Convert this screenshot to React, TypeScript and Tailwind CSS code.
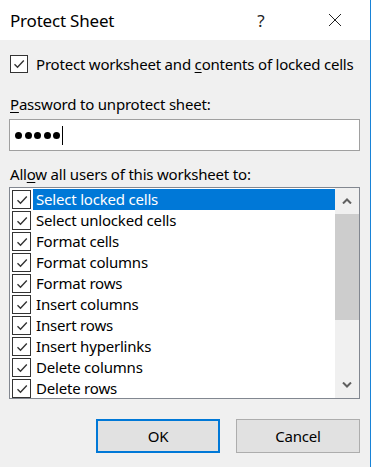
import React from "react";

const Check = ({ size = 18 }: { size?: number }) => (
  <div
    className="shrink-0 border border-[#333333] bg-white flex items-center justify-center"
    style={{ width: size, height: size }}
  >
    <svg width="12" height="10" viewBox="0 0 12 10">
      <path d="M1.5 5.2 L4.5 8.2 L10.8 1.5" fill="none" stroke="#333" strokeWidth="1.4" />
    </svg>
  </div>
);

const items = [
  "Select locked cells",
  "Select unlocked cells",
  "Format cells",
  "Format columns",
  "Format rows",
  "Insert columns",
  "Insert rows",
  "Insert hyperlinks",
  "Delete columns",
  "Delete rows",
];

export default function App() {
  return (
    <div
      className="w-[372px] h-[467px] flex bg-white text-black overflow-hidden"
      style={{ fontFamily: '"Noto Sans", "Open Sans", sans-serif' }}
    >
      <div className="w-[370px] flex flex-col">
        {/* title bar */}
        <div className="h-[40px] shrink-0 bg-white flex items-center">
          <div className="pl-[10px] text-[17px] leading-none text-black tracking-[-0.2px]">Protect Sheet</div>
          <div className="ml-auto w-[20px] text-center text-[17px] leading-none mr-[56px] text-[#222]">?</div>
          <svg width="16" height="16" viewBox="0 0 16 16" className="mr-[27px]">
            <path d="M2 2 L14 14 M14 2 L2 14" stroke="#222" strokeWidth="1" />
          </svg>
        </div>
        {/* body */}
        <div className="flex-1 bg-[#f0f0f0] pl-[9px] pr-[10px] flex flex-col text-[15px] tracking-[-0.2px]">
          <div className="flex items-center mt-[15px] pl-[1px] h-[18px]">
            <Check />
            <span className="ml-[8px] whitespace-nowrap">
              Protect worksheet and <span className="underline underline-offset-2">c</span>ontents of locked cells
            </span>
          </div>
          <div className="mt-[22px] pl-[1px] leading-[18px]">
            <span className="underline underline-offset-2">P</span>assword to unprotect sheet:
          </div>
          <div className="mt-[6px] h-[32px] border border-[#a0a0a0] bg-white flex items-center pl-[5px]">
            <div className="flex items-center gap-[2.5px]">
              {[0, 1, 2, 3, 4].map((i) => (
                <div key={i} className="w-[7px] h-[7px] rounded-full bg-black" />
              ))}
            </div>
            <div className="w-[1px] h-[19px] bg-black ml-[2px]" />
          </div>
          <div className="mt-[14px] pl-[1px] leading-[18px]">
            All<span className="underline underline-offset-2">o</span>w all users of this worksheet to:
          </div>
          <div className="mt-[4px] h-[212px] border border-[#828790] bg-white flex">
            <div className="flex-1 pt-[1px] flex flex-col">
              {items.map((t, i) => (
                <div key={t} className="h-[21px] flex items-center pl-[2px]">
                  <Check size={19} />
                  <div
                    className={
                      "ml-[2px] flex-1 h-[21px] flex items-center pl-[3px] whitespace-nowrap " +
                      (i === 0 ? "bg-[#0078d7] text-white" : "")
                    }
                  >
                    {t}
                  </div>
                </div>
              ))}
            </div>
            <div className="w-[24px] bg-[#f0f0f0] flex flex-col">
              <div className="h-[26px] flex items-center justify-center">
                <svg width="10" height="6" viewBox="0 0 10 6">
                  <path d="M1 5.5 L5 1.5 L9 5.5" fill="none" stroke="#606060" strokeWidth="2" />
                </svg>
              </div>
              <div className="h-[106px] bg-[#cdcdcd]" />
              <div className="flex-1" />
              <div className="h-[26px] flex items-center justify-center">
                <svg width="10" height="6" viewBox="0 0 10 6">
                  <path d="M1 0.5 L5 4.5 L9 0.5" fill="none" stroke="#606060" strokeWidth="2" />
                </svg>
              </div>
            </div>
          </div>
          <div className="mt-[20px] flex justify-end gap-[16px]">
            <div className="w-[124px] h-[34px] border-2 border-[#0078d7] bg-[#e1e1e1] flex items-center justify-center">
              OK
            </div>
            <div className="w-[124px] h-[34px] border border-[#adadad] bg-[#e1e1e1] flex items-center justify-center">
              Cancel
            </div>
          </div>
        </div>
      </div>
      <div className="w-[1px] bg-[#1883d7]" />
      <div className="w-[1px] bg-white" />
    </div>
  );
}
